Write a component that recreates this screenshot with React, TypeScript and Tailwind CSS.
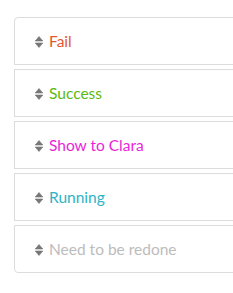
import React from 'react';

const items = [
  { label: 'Fail', color: 'text-[#e4572e]' },
  { label: 'Success', color: 'text-[#5cb90d]' },
  { label: 'Show to Clara', color: 'text-[#ec1fd8]' },
  { label: 'Running', color: 'text-[#2fb3c6]' },
  { label: 'Need to be redone', color: 'text-[#bcbcbc]' },
];

function SortIcon() {
  return (
    <svg width="8" height="12" viewBox="0 0 8 12" className="shrink-0">
      <path d="M4 0.5 L7.8 5 L0.2 5 Z" fill="#777" stroke="#777" strokeWidth="0.6" strokeLinejoin="round" />
      <path d="M0.2 7 L7.8 7 L4 11.5 Z" fill="#777" stroke="#777" strokeWidth="0.6" strokeLinejoin="round" />
    </svg>
  );
}

export default function App() {
  return (
    <div className="w-full overflow-hidden bg-white pt-[17px] pl-[14px]" style={{ fontFamily: 'Lato, "Open Sans", sans-serif' }}>
      <div className="w-[300px] flex flex-col gap-[4px]">
        {items.map((item, idx) => (
          <div
            key={item.label}
            className={`h-[48px] border border-[#dcdcdc] bg-white flex items-center gap-[6px] pl-[20px] pt-[2px] ${
              idx === 0 ? 'rounded-tl-[4px]' : ''
            } ${idx === items.length - 1 ? 'rounded-bl-[4px]' : ''}`}
          >
            <SortIcon />
            <span className={`text-[15.5px] leading-none ${item.color}`}>{item.label}</span>
          </div>
        ))}
      </div>
    </div>
  );
}
